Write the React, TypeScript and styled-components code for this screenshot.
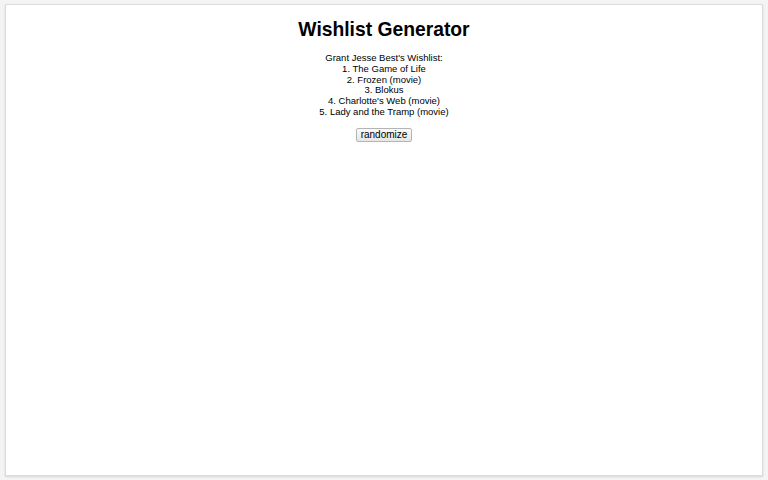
import React, { useState } from 'react'
import styled, { createGlobalStyle } from 'styled-components'

const GlobalStyle = createGlobalStyle`
  html, body {
    margin: 0;
    padding: 0;
    background: #f4f4f4;
  }
  body {
    font-family: "Liberation Sans", Arial, sans-serif;
    color: #000;
  }
`

const Page = styled.div`
  box-sizing: border-box;
  height: 480px;
  padding: 4px 5px;
`

const Card = styled.main`
  box-sizing: border-box;
  height: 472px;
  background: #fff;
  border: 1px solid #dcdcdc;
  box-shadow: 0 1px 2px rgba(0, 0, 0, 0.12);
  display: flex;
  flex-direction: column;
  align-items: center;
  padding-top: 13px;
`

const Title = styled.h1`
  margin: 0 0 12px;
  font-size: 19.3px;
  font-weight: bold;
  line-height: 23px;
`

const List = styled.div`
  font-size: 9.5px;
  line-height: 10.8px;
  text-align: center;
`

const Randomize = styled.button`
  margin-top: 10px;
  font-family: "Liberation Sans", Arial, sans-serif;
  font-size: 10px;
  line-height: 12px;
  padding: 0 4px;
  background: linear-gradient(#fafafa, #e6e6e6);
  border: 1px solid #b4b4b4;
  border-radius: 2px;
  color: #000;
`

const items = [
  'The Game of Life',
  'Frozen (movie)',
  'Blokus',
  "Charlotte's Web (movie)",
  'Lady and the Tramp (movie)',
]

export default function App() {
  const [wishes, setWishes] = useState(items)

  const shuffle = () => {
    const next = [...wishes]
    for (let i = next.length - 1; i > 0; i--) {
      const j = Math.floor(Math.random() * (i + 1))
      ;[next[i], next[j]] = [next[j], next[i]]
    }
    setWishes(next)
  }

  return (
    <>
      <GlobalStyle />
      <Page>
        <Card>
          <Title>Wishlist Generator</Title>
          <List>
            <div>Grant Jesse Best's Wishlist:</div>
            {wishes.map((w, i) => (
              <div key={w}>
                {i + 1}. {w}
              </div>
            ))}
          </List>
          <Randomize onClick={shuffle}>randomize</Randomize>
        </Card>
      </Page>
    </>
  )
}
